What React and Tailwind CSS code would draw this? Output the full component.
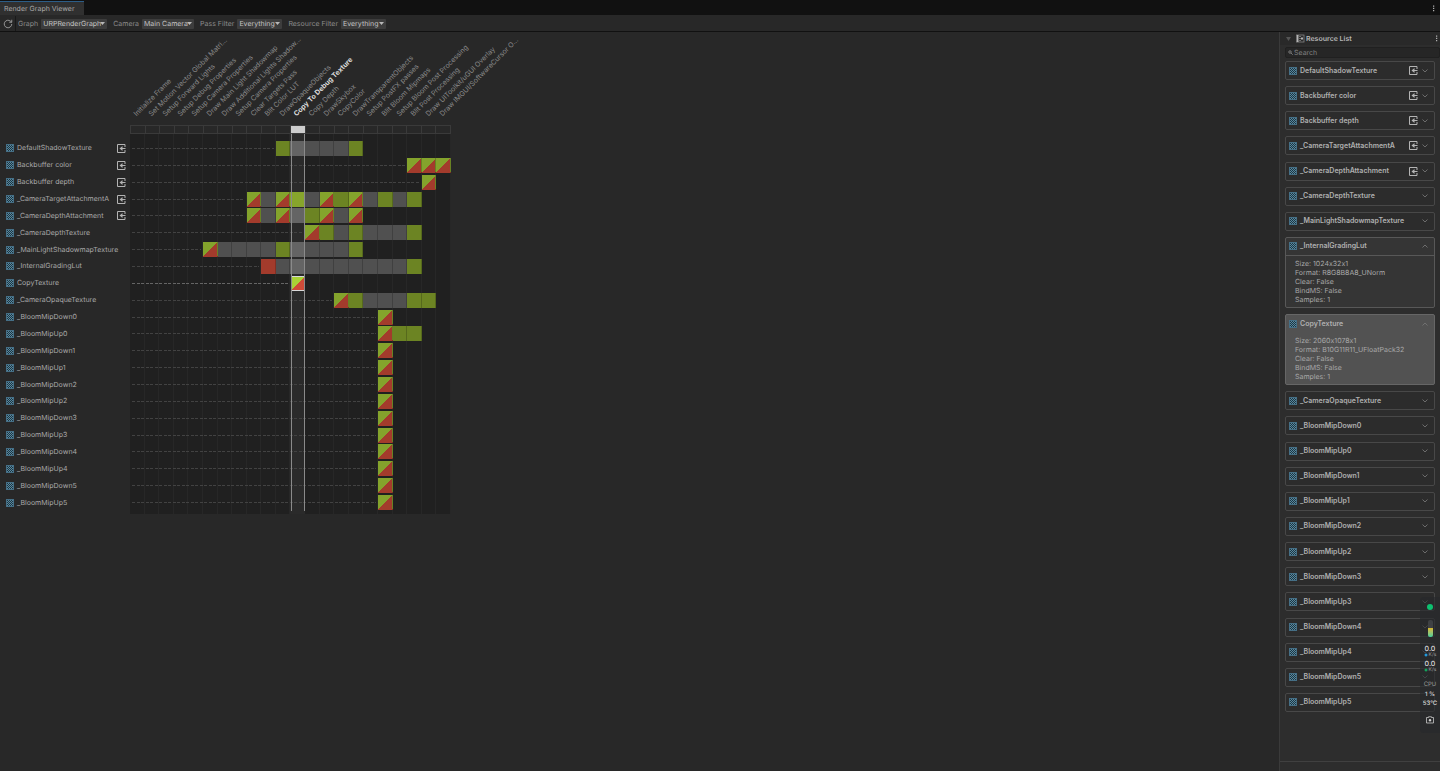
import React, { useState } from 'react';

const passes = [
  'Initialize Frame',
  'Set Motion Vector Global Matri...',
  'Setup Forward Lights',
  'Setup Debug Properties',
  'Setup Camera Properties',
  'Draw Main Light Shadowmap',
  'Draw Additional Lights Shadow...',
  'Setup Camera Properties',
  'Clear Targets Pass',
  'Blit Color LUT',
  'DrawOpaqueObjects',
  'Copy To Debug Texture',
  'Copy Depth',
  'DrawSkybox',
  'CopyColor',
  'DrawTransparentObjects',
  'Setup PostFX passes',
  'Blit Bloom Mipmaps',
  'Setup Bloom Post Processing',
  'Blit Post Processing',
  'Draw UIToolkit/uGUI Overlay',
  'Draw IMGUI/SoftwareCursor O...',
];

const SELECTED_PASS = 11;

// usage: one letter per pass starting at `start`
// r = read, w = write, b = read/write, - = alive but unused
const resources = [
  { name: 'DefaultShadowTexture', imported: true, start: 10, usage: 'r----r' },
  { name: 'Backbuffer color', imported: true, start: 19, usage: 'bbb' },
  { name: 'Backbuffer depth', imported: true, start: 20, usage: 'b' },
  { name: '_CameraTargetAttachmentA', imported: true, start: 8, usage: 'b-br-brb-r-r' },
  { name: '_CameraDepthAttachment', imported: true, start: 8, usage: 'b-b-rb-b' },
  { name: '_CameraDepthTexture', start: 12, usage: 'br-r---r' },
  { name: '_MainLightShadowmapTexture', start: 5, usage: 'b----r----r' },
  {
    name: '_InternalGradingLut',
    start: 9,
    usage: 'w---------r',
    info: ['Size: 1024x32x1', 'Format: R8G8B8A8_UNorm', 'Clear: False', 'BindMS: False', 'Samples: 1'],
  },
  {
    name: 'CopyTexture',
    start: 11,
    usage: 'b',
    selected: true,
    info: ['Size: 2060x1078x1', 'Format: B10G11R11_UFloatPack32', 'Clear: False', 'BindMS: False', 'Samples: 1'],
  },
  { name: '_CameraOpaqueTexture', start: 14, usage: 'br---rr' },
  { name: '_BloomMipDown0', start: 17, usage: 'b' },
  { name: '_BloomMipUp0', start: 17, usage: 'brr' },
  { name: '_BloomMipDown1', start: 17, usage: 'b' },
  { name: '_BloomMipUp1', start: 17, usage: 'b' },
  { name: '_BloomMipDown2', start: 17, usage: 'b' },
  { name: '_BloomMipUp2', start: 17, usage: 'b' },
  { name: '_BloomMipDown3', start: 17, usage: 'b' },
  { name: '_BloomMipUp3', start: 17, usage: 'b' },
  { name: '_BloomMipDown4', start: 17, usage: 'b' },
  { name: '_BloomMipUp4', start: 17, usage: 'b' },
  { name: '_BloomMipDown5', start: 17, usage: 'b' },
  { name: '_BloomMipUp5', start: 17, usage: 'b' },
];

const TextureIcon = () => (
  <svg className="w-2 h-2 shrink-0" viewBox="0 0 8 8" shapeRendering="crispEdges">
    <rect width="8" height="8" fill="#456f86" />
    <rect x="1" y="1" width="6" height="6" fill="#1f3540" />
    <path
      d="M2 1h1v1H2zM4 1h1v1H4zM6 1h1v1H6zM1 2h1v1H1zM3 2h1v1H3zM5 2h1v1H5zM2 3h1v1H2zM4 3h1v1H4zM6 3h1v1H6zM1 4h1v1H1zM3 4h1v1H3zM5 4h1v1H5zM2 5h1v1H2zM4 5h1v1H4zM6 5h1v1H6zM1 6h1v1H1zM3 6h1v1H3zM5 6h1v1H5z"
      fill="#5688a0"
    />
  </svg>
);

const ImportIcon = () => (
  <svg className="w-[9px] h-[9px] shrink-0" viewBox="0 0 18 18" fill="none" stroke="#b4b4b4" strokeWidth="2">
    <path d="M16 6V1H1v16h15v-5" />
    <path d="M17 9H9" />
    <path d="M11 4 5 9l6 5z" fill="#b4b4b4" stroke="none" />
  </svg>
);

const Chevron = ({ open }) => (
  <svg className="w-[6px] h-[6px] shrink-0" viewBox="0 0 12 12" fill="none" stroke="#747474" strokeWidth="1.800">
    <path d={open ? 'M1 9 6 4l5 5' : 'M1 3l5 5 5-5'} />
  </svg>
);

const Kebab = () => (
  <svg className="w-[3px] h-[7px]" viewBox="0 0 6 14" fill="#b0b0b0">
    <path d="M2 1h2.500v2.500H2zM2 5.500h2.500V8H2zM2 10h2.500v2.500H2z" />
  </svg>
);

const Dropdown = ({ id, label, value, width }) => (
  <div className="flex items-center gap-[3px]">
    <label htmlFor={id} className="leading-[10px] whitespace-nowrap text-[#8c8c8c]">{label}</label>
    <div className="relative">
      <select
        id={id}
        defaultValue={value}
        className={`block h-[10px] leading-[10px] pl-[2px] appearance-none rounded-[1px] bg-[#3d3d3d] text-[#c4c4c4] outline-none [text-rendering:geometricPrecision] ${width}`}
      >
        <option>{value}</option>
      </select>
      <svg className="absolute right-[2px] top-[3px] w-[5px] h-[3px] pointer-events-none" viewBox="0 0 10 6" fill="#b8b8b8">
        <path d="M0 0h10L5 6z" />
      </svg>
    </div>
  </div>
);

const Toolbar = () => (
  <div className="flex items-center h-[17px] pt-[1px] bg-[#282828] border-b border-[#111111] text-[7px]">
    <button aria-label="Capture" className="flex items-center justify-center w-4 h-[15px] border-r border-[#191919]">
      <svg className="w-[10px] h-[10px]" viewBox="0 0 20 20" fill="none" stroke="#a0a0a0" strokeWidth="1.800">
        <path d="M17.500 10a7.500 7.500 0 1 1-2.500-5.600L17.500 6.500" />
        <path d="M17.500 1.500v5h-5" />
      </svg>
    </button>
    <div className="flex items-center gap-[6px] pl-[2px]">
      <Dropdown id="graph" label="Graph" value="URPRenderGraph" width="w-[66px]" />
      <Dropdown id="camera" label="Camera" value="Main Camera" width="w-[52px]" />
      <Dropdown id="pass-filter" label="Pass Filter" value="Everything" width="w-[45px]" />
      <Dropdown id="resource-filter" label="Resource Filter" value="Everything" width="w-[45px]" />
    </div>
  </div>
);

const cellColors = {
  dim: {
    r: 'bg-[#6c8423]',
    w: 'bg-[#a33b2c]',
    b: 'bg-[linear-gradient(135deg,#84a32c_50%,#a33b2c_50%)]',
    '-': 'bg-[#505050]',
  },
  lit: {
    r: 'bg-[#87a52c]',
    w: 'bg-[#cf4b38]',
    b: 'bg-[linear-gradient(135deg,#a9d136_50%,#cf4b38_50%)]',
    '-': 'bg-[#646464]',
  },
};

const UsageCell = ({ kind, lit, outlined }) => (
  <div
    className={`h-[15px] border-r border-black/20 ${cellColors[lit ? 'lit' : 'dim'][kind]} ${
      outlined ? 'outline outline-1 -outline-offset-1 outline-[#d8d8d8]' : ''
    }`}
  />
);

const GraphRow = ({ resource }) => (
  <div className="grid grid-cols-[repeat(22,minmax(0,1fr))] items-center">
    <div className="px-[2px]" style={{ gridColumn: `1 / span ${resource.start}` }}>
      <svg className="block w-full h-px" shapeRendering="crispEdges">
        <line
          x1="0" y1="0.500" x2="100%" y2="0.500"
          stroke={resource.selected ? '#656565' : '#424242'}
          strokeDasharray="3 1.500"
        />
      </svg>
    </div>
    {resource.usage.split('').map((kind, i) => (
      <UsageCell
        key={i}
        kind={kind}
        lit={resource.start + i === SELECTED_PASS}
        outlined={resource.selected}
      />
    ))}
  </div>
);

const PassHeader = () => (
  <div className="grid grid-cols-[repeat(22,minmax(0,1fr))] w-[321px] h-[93px] pb-[7px] items-end">
    {passes.map((pass, i) => (
      <button
        key={i}
        className={`flex justify-start pl-2 h-2 whitespace-nowrap text-[7px] leading-2 ${
          i === SELECTED_PASS ? 'font-bold text-[#dedede]' : 'text-[#8a8a8a]'
        }`}
      >
        <span className="block shrink-0 origin-bottom-left -rotate-45">{pass}</span>
      </button>
    ))}
  </div>
);

const GraphView = () => (
  <main className="flex-1 min-w-0 overflow-hidden">
    <div className="flex">
      <div className="w-[130px] shrink-0 pt-[108px]">
        <ul className="grid grid-rows-[repeat(22,minmax(0,1fr))] h-[371px] pl-[6px] pr-1">
          {resources.map((resource) => (
            <li key={resource.name} className="flex items-center gap-[3px] text-[7px] leading-2 text-[#a8a8a8]">
              <TextureIcon />
              <span className="flex-1 whitespace-nowrap">{resource.name}</span>
              {resource.imported && <ImportIcon />}
            </li>
          ))}
        </ul>
      </div>
      <div>
        <PassHeader />
        <div className="grid grid-cols-[repeat(22,minmax(0,1fr))] w-[321px] h-[9px] border-l border-[#3a3a3a]">
          {passes.map((pass, i) => (
            <div
              key={i}
              className={`border-y border-r border-[#3a3a3a] ${i === SELECTED_PASS ? 'bg-[#cdcdcd] rounded-[1px]' : ''}`}
            />
          ))}
        </div>
        <div className="relative w-[321px] pt-[6px] pb-[3px] bg-[#202020]">
          <div className="absolute inset-0 grid grid-cols-[repeat(22,minmax(0,1fr))]">
            {passes.map((pass, i) => (
              <div
                key={i}
                className={i === SELECTED_PASS ? 'bg-[#2a2a2a]' : 'border-r border-[#272727]'}
              />
            ))}
          </div>
          <div className="relative grid grid-rows-[repeat(22,minmax(0,1fr))] h-[371px]">
            {resources.map((resource) => (
              <GraphRow key={resource.name} resource={resource} />
            ))}
          </div>
          {/* selected pass guide lines */}
          <div className="absolute inset-x-0 top-0 bottom-[3px] grid grid-cols-[repeat(22,minmax(0,1fr))] pointer-events-none">
            <div className="col-start-12 border-x border-[#8a8a8a]" />
          </div>
        </div>
      </div>
    </div>
  </main>
);

const ResourceCard = ({ resource }) => {
  const [open, setOpen] = useState(Boolean(resource.info));
  const info = resource.info || [];

  return (
    <section
      className={`shrink-0 rounded-[2px] border ${
        resource.selected
          ? 'bg-[#525252] border-[#666666]'
          : resource.info
            ? 'bg-[#353535] border-[#585858]'
            : 'bg-[#2c2c2c] border-[#484848]'
      }`}
    >
      <button
        onClick={() => setOpen(!open)}
        className="flex items-center w-full h-[17px] gap-[3px] pl-[3px] pr-[6px] text-left"
      >
        <TextureIcon />
        <span className="flex-1 text-[7px] leading-2 font-semibold text-[#b0b0b0]">{resource.name}</span>
        {resource.imported && <ImportIcon />}
        <span className="pl-[1px]">
          <Chevron open={open && info.length > 0} />
        </span>
      </button>
      {open && info.length > 0 && (
        <div
          className={`h-[52px] pt-[3px] pl-[9px] border-t text-[7px] leading-[9px] text-[#a8a8a8] ${
            resource.selected ? 'border-[#525252]' : 'border-[#585858]'
          }`}
        >
          {info.map((line) => (
            <p key={line}>{line}</p>
          ))}
        </div>
      )}
    </section>
  );
};

const ResourcePanel = () => (
  <aside className="flex flex-col w-[161px] shrink-0 bg-[#2d2d2d] border-l border-[#3a3a3a]">
    <header className="flex items-center h-[13px] pl-[6px] pr-[2px] bg-[#292929]">
      <svg className="w-[5px] h-1" viewBox="0 0 10 8" fill="#555555">
        <path d="M0 0h10L5 8z" />
      </svg>
      <svg className="w-[9px] h-[9px] ml-[5px]" viewBox="0 0 18 18" fill="none">
        <rect x="1" y="2" width="15" height="14" stroke="#8a8a8a" strokeWidth="1.500" />
        <path d="M2 2h3v14H2z" fill="#b4b4b4" />
        <path d="M7 4h2v2H7zM7 8h2v2H7zM7 12h2v2H7zM10 7h4v4h-4z" fill="#b4b4b4" />
      </svg>
      <h2 className="flex-1 ml-[1px] text-[7px] leading-2 font-semibold text-[#b8b8b8]">Resource List</h2>
      <button aria-label="Panel options">
        <Kebab />
      </button>
    </header>
    <div className="flex items-center h-[11px] mt-[2px] ml-[5px] pl-[2px] gap-[1px] rounded-[2px] border border-[#202020] bg-[#262626]">
      <svg className="w-[5px] h-[5px] shrink-0" viewBox="0 0 10 10" fill="none" stroke="#909090" strokeWidth="1.500">
        <circle cx="4" cy="4" r="2.500" />
        <path d="M6 6l3.500 3.500" />
      </svg>
      <input
        type="text"
        aria-label="Search"
        placeholder="Search"
        className="w-full min-w-0 h-[9px] text-[7px] leading-2 text-[#b0b0b0] placeholder:text-[#828282] bg-transparent outline-none [text-rendering:geometricPrecision]"
      />
    </div>
    <div className="flex flex-col justify-between h-[651px] mt-[3px] ml-[5px] mr-[5px]">
      {resources.map((resource) => (
        <ResourceCard key={resource.name} resource={resource} />
      ))}
    </div>
    <div className="flex-1" />
    <div className="h-[10px] border-t border-[#404040]" />
  </aside>
);

// floating system stats on the right edge of the desktop
const StatsWidget = () => (
  <div className="absolute right-0 top-[597px] w-[20px] h-[136px] flex flex-col items-center pt-[7px] rounded-l-[4px] bg-[#26282c]/60 text-[7px] leading-[7px] text-[#dddddd]">
    <div className="w-[6px] h-[6px] shrink-0 rounded-full bg-[#0dc070]" />
    <div className="flex flex-col justify-end w-[5px] h-[17px] shrink-0 mt-[10px] rounded-[2px] bg-[#3f4144] overflow-hidden">
      <div className="h-[9px] bg-linear-to-b from-[#d5b52a] to-[#35cf9a]" />
    </div>
    <div className="mt-[8px] font-medium">0.0</div>
    <div className="flex items-center gap-[1px] text-[5px] leading-[6px] text-[#9a9a9a]">
      <svg className="w-1 h-1" viewBox="0 0 8 8" fill="#22a5ee">
        <path d="M4 0l1.500 2.500L8 4 5.500 5.500 4 8 2.500 5.500 0 4l2.500-1.500z" />
      </svg>
      K/s
    </div>
    <div className="mt-[2px] font-medium">0.0</div>
    <div className="flex items-center gap-[1px] text-[5px] leading-[6px] text-[#9a9a9a]">
      <svg className="w-1 h-1" viewBox="0 0 8 8" fill="#12b060">
        <path d="M4 0l1.500 2.500L8 4 5.500 5.500 4 8 2.500 5.500 0 4l2.500-1.500z" />
      </svg>
      K/s
    </div>
    <div className="mt-[8px] text-[6px] text-[#9a9a9a]">CPU</div>
    <div className="mt-[3px] text-[6px] font-medium">1 %</div>
    <div className="mt-[2px] text-[6px] font-medium whitespace-nowrap">53°C</div>
    <svg className="w-2 h-2 mt-[9px] shrink-0" viewBox="0 0 16 16" fill="none" stroke="#d0d0d0" strokeWidth="1.500">
      <path d="M5 3V1.500h6V3h4v11H1V3z" />
      <circle cx="8" cy="8.500" r="1.800" fill="#ffffff" />
    </svg>
  </div>
);

const App = () => (
  <div className="relative flex flex-col min-h-screen bg-[#282828] font-['Inter',sans-serif] [font-feature-settings:'calt'_0] [text-rendering:geometricPrecision] overflow-hidden">
    <div className="flex items-end justify-between h-[15px] pt-[1px] bg-[#111111]">
      <div className="flex items-center h-[14px] w-[84px] pl-1 border-t border-[#2c5d87] bg-[#303030] text-[7px] leading-2 text-[#a8a8a8]">
        Render Graph Viewer
      </div>
      <button aria-label="Window options" className="h-[14px] pr-[5px]">
        <Kebab />
      </button>
    </div>
    <Toolbar />
    <div className="flex flex-1">
      <GraphView />
      <ResourcePanel />
    </div>
    <StatsWidget />
  </div>
);

export default App;
